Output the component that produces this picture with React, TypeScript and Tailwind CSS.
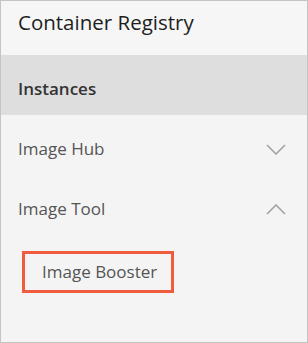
const font = { fontFamily: '"Open Sans", "Noto Sans", sans-serif' };

function Chevron({ up }: { up?: boolean }) {
  return (
    <svg width="20" height="11" viewBox="0 0 20 11" fill="none">
      <path
        d={up ? "M1 10 L10 1 L19 10" : "M1 1 L10 10 L19 1"}
        stroke="#a3a3a3"
        strokeWidth="1.6"
      />
    </svg>
  );
}

export default function App() {
  return (
    <div
      className="w-[308px] h-[343px] border border-[#c4c4c4] bg-[#f4f4f4] flex flex-col overflow-hidden"
      style={font}
    >
      {/* Title */}
      <div className="h-[54px] bg-[#f6f6f6] pl-[17px] pt-[6px] text-[20.5px] text-[#1e1e1e]">
        Container Registry
      </div>

      {/* Instances */}
      <div className="h-[60px] bg-[#dedede] pl-[17px] flex items-center pt-[8px] text-[17px] font-semibold text-[#333]">
        Instances
      </div>

      {/* Image Hub */}
      <div className="h-[60px] pl-[17px] pr-[21px] flex items-center justify-between pt-[8px] text-[17px] text-[#555]">
        <span>Image Hub</span>
        <Chevron />
      </div>

      {/* Image Tool */}
      <div className="h-[60px] pl-[17px] pr-[21px] flex items-center justify-between pt-[8px] text-[17px] text-[#555]">
        <span>Image Tool</span>
        <Chevron up />
      </div>

      {/* Image Booster */}
      <div className="pl-[21px] pt-[16px]">
        <div className="w-[152px] h-[42px] border-[3px] border-[#f25c3e] pl-[17px] flex items-center text-[17px] text-[#555]">
          Image Booster
        </div>
      </div>
    </div>
  );
}
